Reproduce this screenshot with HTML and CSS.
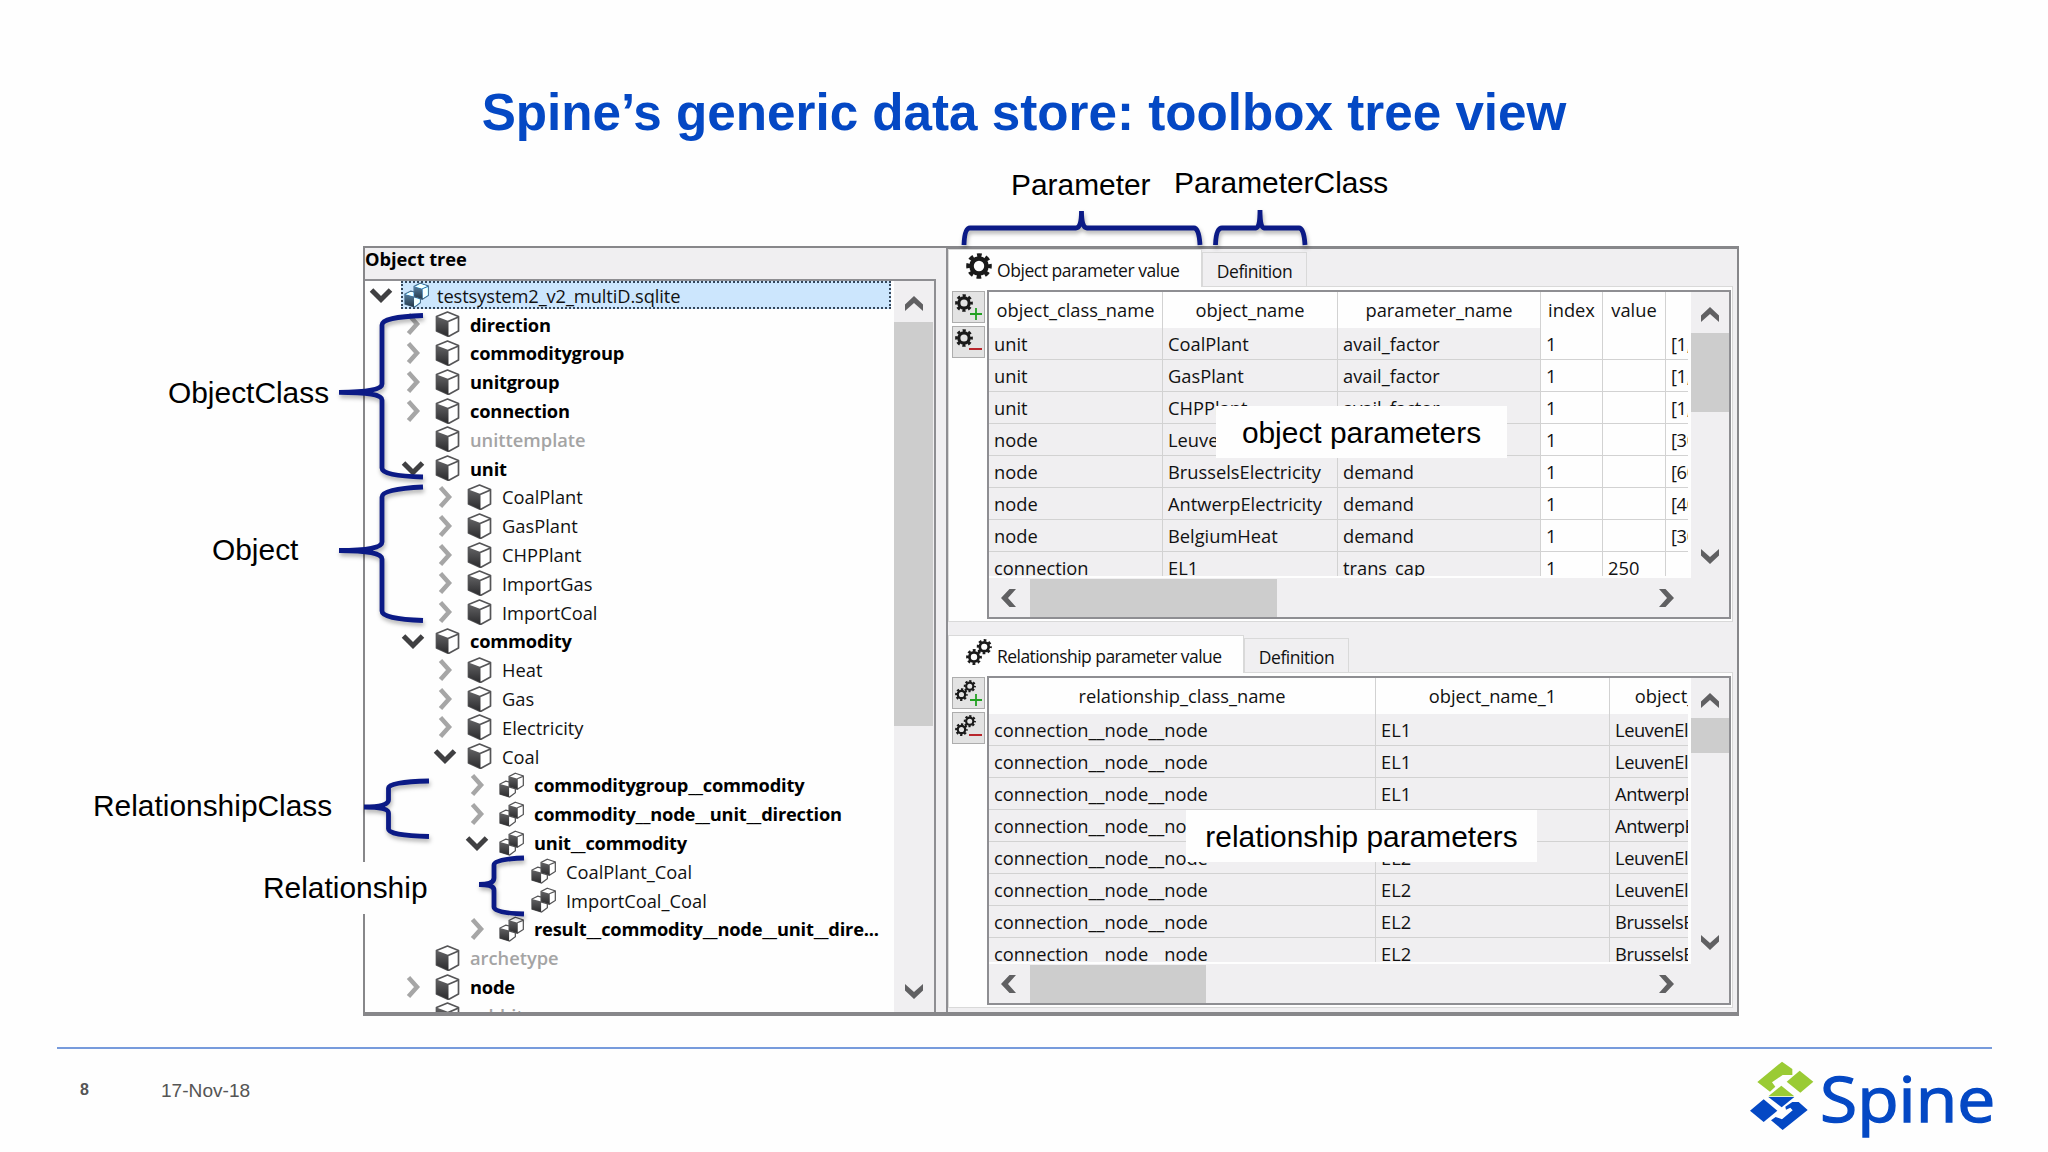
FILE: index.html
```html
<!DOCTYPE html>
<html lang="en">
<head>
  <meta charset="UTF-8" />
  <title>Spine’s generic data store: toolbox tree view</title>
  <link rel="stylesheet" href="styles.css">
</head>
<body>
  <!-- icon set -->
  <svg class="defs">
    <defs>
      <linearGradient id="shade" x1="0" y1="0" x2="0" y2="1">
        <stop offset="0" stop-color="#626264" />
        <stop offset="1" stop-color="#2b2b2d" />
      </linearGradient>
      <symbol id="right" viewBox="0 0 24 24"><path d="M7.500 2.500l8.500 9.500L7.500 21.500" fill="none" stroke="#a6a6a6" stroke-width="4.500" /></symbol>
      <symbol id="down" viewBox="0 0 24 24"><path d="M2.500 7l9.500 9.500L21.500 7" fill="none" stroke="#404042" stroke-width="5" /></symbol>
      <symbol id="arrow" viewBox="0 0 20 20"><path d="M1 10.500L10 2l9 8.500V17l-9-8-9 8z" fill="#606062" /></symbol>
      <symbol id="cube" viewBox="0 0 24 26">
        <path d="M12 1L23 5.500V20l-10 5.500L1 20V5.500z" fill="#fff" stroke="#555557" stroke-width="1.700" stroke-linejoin="round" />
        <path d="M1 5.500L13 10v15.500L1 20z" fill="url(#shade)" />
        <path d="M12.500 10.500L23 6" stroke="#555557" stroke-width="1.900" />
      </symbol>
      <symbol id="cubes" viewBox="0 0 26 26">
        <path d="M7 9l10 2.500v9.500l-6 4.500-10-3V12z" fill="#fff" stroke="#555557" stroke-width="1.300" />
        <path d="M1 12l9.500 2.500v11L1 22.500z" fill="url(#shade)" />
        <path d="M17 .8l8.300 2.700V13.500l-6.300 4L10.500 15V4z" fill="#fff" stroke="#555557" stroke-width="1.300" />
        <path d="M10.500 4l9 2.500v11l-9-3z" fill="url(#shade)" />
        <path d="M19 6.500l6-2.500" stroke="#555557" stroke-width="1.300" />
      </symbol>
      <symbol id="gear" viewBox="0 0 26 26">
        <circle cx="13" cy="13" r="7.500" fill="none" stroke="#1a1a1a" stroke-width="4.600" />
        <circle cx="13" cy="13" r="10.800" fill="none" stroke="#1a1a1a" stroke-width="4" stroke-dasharray="4.600 3.882" stroke-dashoffset="2.300" />
      </symbol>
      <symbol id="gears" viewBox="0 0 26 26">
        <use href="#gear" x="0" y="10" width="16" height="16" />
        <use href="#gear" x="10.500" y="0" width="15.500" height="15.500" />
      </symbol>
    </defs>
  </svg>

  <div class="slide">
    <h1>Spine’s generic data store: toolbox tree view</h1>

    <div class="window">
      <div class="tree-pane">
        <div class="tree-title">Object tree</div>
        <div class="tree-box">
          <div class="tree">
            <div class="row l0"><svg class="chev"><use href="#down" /></svg><div class="selected"><svg class="icon"><use href="#cubes" /></svg><span>testsystem2_v2_multiD.sqlite</span></div></div>
            <div class="row l1"><svg class="chev"><use href="#right" /></svg><svg class="icon"><use href="#cube" /></svg><b>direction</b></div>
            <div class="row l1"><svg class="chev"><use href="#right" /></svg><svg class="icon"><use href="#cube" /></svg><b>commoditygroup</b></div>
            <div class="row l1"><svg class="chev"><use href="#right" /></svg><svg class="icon"><use href="#cube" /></svg><b>unitgroup</b></div>
            <div class="row l1"><svg class="chev"><use href="#right" /></svg><svg class="icon"><use href="#cube" /></svg><b>connection</b></div>
            <div class="row l1"><i class="chev"></i><svg class="icon"><use href="#cube" /></svg><b class="empty">unittemplate</b></div>
            <div class="row l1"><svg class="chev"><use href="#down" /></svg><svg class="icon"><use href="#cube" /></svg><b>unit</b></div>
            <div class="row l2"><svg class="chev"><use href="#right" /></svg><svg class="icon"><use href="#cube" /></svg><span>CoalPlant</span></div>
            <div class="row l2"><svg class="chev"><use href="#right" /></svg><svg class="icon"><use href="#cube" /></svg><span>GasPlant</span></div>
            <div class="row l2"><svg class="chev"><use href="#right" /></svg><svg class="icon"><use href="#cube" /></svg><span>CHPPlant</span></div>
            <div class="row l2"><svg class="chev"><use href="#right" /></svg><svg class="icon"><use href="#cube" /></svg><span>ImportGas</span></div>
            <div class="row l2"><svg class="chev"><use href="#right" /></svg><svg class="icon"><use href="#cube" /></svg><span>ImportCoal</span></div>
            <div class="row l1"><svg class="chev"><use href="#down" /></svg><svg class="icon"><use href="#cube" /></svg><b>commodity</b></div>
            <div class="row l2"><svg class="chev"><use href="#right" /></svg><svg class="icon"><use href="#cube" /></svg><span>Heat</span></div>
            <div class="row l2"><svg class="chev"><use href="#right" /></svg><svg class="icon"><use href="#cube" /></svg><span>Gas</span></div>
            <div class="row l2"><svg class="chev"><use href="#right" /></svg><svg class="icon"><use href="#cube" /></svg><span>Electricity</span></div>
            <div class="row l2"><svg class="chev"><use href="#down" /></svg><svg class="icon"><use href="#cube" /></svg><span>Coal</span></div>
            <div class="row l3"><svg class="chev"><use href="#right" /></svg><svg class="icon"><use href="#cubes" /></svg><b>commoditygroup__commodity</b></div>
            <div class="row l3"><svg class="chev"><use href="#right" /></svg><svg class="icon"><use href="#cubes" /></svg><b>commodity__node__unit__direction</b></div>
            <div class="row l3"><svg class="chev"><use href="#down" /></svg><svg class="icon"><use href="#cubes" /></svg><b>unit__commodity</b></div>
            <div class="row l4"><i class="chev"></i><svg class="icon"><use href="#cubes" /></svg><span>CoalPlant_Coal</span></div>
            <div class="row l4"><i class="chev"></i><svg class="icon"><use href="#cubes" /></svg><span>ImportCoal_Coal</span></div>
            <div class="row l3"><svg class="chev"><use href="#right" /></svg><svg class="icon"><use href="#cubes" /></svg><b>result__commodity__node__unit__dire...</b></div>
            <div class="row l1"><i class="chev"></i><svg class="icon"><use href="#cube" /></svg><b class="empty">archetype</b></div>
            <div class="row l1"><svg class="chev"><use href="#right" /></svg><svg class="icon"><use href="#cube" /></svg><b>node</b></div>
            <div class="row l1"><i class="chev"></i><svg class="icon"><use href="#cube" /></svg><b class="empty">rabbit</b></div>
          </div>
          <div class="vscroll tree-scroll">
            <svg class="arrow"><use href="#arrow" /></svg>
            <div class="thumb"></div>
            <svg class="arrow flip"><use href="#arrow" /></svg>
          </div>
        </div>
      </div>

      <div class="param-pane">
        <div class="tabs">
          <div class="tab active"><svg><use href="#gear" /></svg>Object parameter value</div>
          <div class="tab">Definition</div>
        </div>
        <div class="tab-page">
          <div class="tools">
            <button><svg class="tool"><use href="#gear" width="18" height="18" /><path d="M21 14v12M15 20h12" stroke="#22a022" stroke-width="1.800" /></svg></button>
            <button><svg class="tool"><use href="#gear" width="18" height="18" /><path d="M14 20h13" stroke="#b8262c" stroke-width="2" /></svg></button>
          </div>
          <div class="grid">
            <div class="view">
              <table class="objects">
                <colgroup><col class="c1"><col class="c2"><col class="c3"><col class="c4"><col class="c5"><col class="c6"></colgroup>
                <tr><th>object_class_name</th><th>object_name</th><th>parameter_name</th><th>index</th><th>value</th><th></th></tr>
                <tr><td>unit</td><td>CoalPlant</td><td>avail_factor</td><td>1</td><td></td><td>[1, 1</td></tr>
                <tr><td>unit</td><td>GasPlant</td><td>avail_factor</td><td>1</td><td></td><td>[1, 1</td></tr>
                <tr><td>unit</td><td>CHPPlant</td><td>avail_factor</td><td>1</td><td></td><td>[1, 1</td></tr>
                <tr><td>node</td><td>LeuvenElectricity</td><td>demand</td><td>1</td><td></td><td>[300</td></tr>
                <tr><td>node</td><td>BrusselsElectricity</td><td>demand</td><td>1</td><td></td><td>[600</td></tr>
                <tr><td>node</td><td>AntwerpElectricity</td><td>demand</td><td>1</td><td></td><td>[400</td></tr>
                <tr><td>node</td><td>BelgiumHeat</td><td>demand</td><td>1</td><td></td><td>[300</td></tr>
                <tr><td>connection</td><td>EL1</td><td>trans_cap</td><td>1</td><td>250</td><td></td></tr>
              </table>
            </div>
            <div class="vscroll object-scroll">
              <svg class="arrow"><use href="#arrow" /></svg>
              <div class="thumb"></div>
              <svg class="arrow flip"><use href="#arrow" /></svg>
            </div>
            <div class="hscroll">
              <svg class="arrow to-left"><use href="#arrow" /></svg>
              <div class="thumb"></div>
              <svg class="arrow to-right"><use href="#arrow" /></svg>
            </div>
          </div>
        </div>

        <div class="tabs second">
          <div class="tab active"><svg><use href="#gears" /></svg>Relationship parameter value</div>
          <div class="tab">Definition</div>
        </div>
        <div class="tab-page">
          <div class="tools">
            <button><svg class="tool"><use href="#gears" width="21" height="21" /><path d="M21 14v12M15 20h12" stroke="#22a022" stroke-width="1.800" /></svg></button>
            <button><svg class="tool"><use href="#gears" width="21" height="21" /><path d="M14 20h13" stroke="#b8262c" stroke-width="2" /></svg></button>
          </div>
          <div class="grid">
            <div class="view">
              <table class="relations">
                <colgroup><col class="r1"><col class="r2"><col class="r3"></colgroup>
                <tr><th>relationship_class_name</th><th>object_name_1</th><th>object_name_2</th></tr>
                <tr><td>connection__node__node</td><td>EL1</td><td>LeuvenElectricity</td></tr>
                <tr><td>connection__node__node</td><td>EL1</td><td>LeuvenElectricity</td></tr>
                <tr><td>connection__node__node</td><td>EL1</td><td>AntwerpElectricity</td></tr>
                <tr><td>connection__node__node</td><td>EL1</td><td>AntwerpElectricity</td></tr>
                <tr><td>connection__node__node</td><td>EL2</td><td>LeuvenElectricity</td></tr>
                <tr><td>connection__node__node</td><td>EL2</td><td>LeuvenElectricity</td></tr>
                <tr><td>connection__node__node</td><td>EL2</td><td>BrusselsElectricity</td></tr>
                <tr><td>connection__node__node</td><td>EL2</td><td>BrusselsElectricity</td></tr>
              </table>
            </div>
            <div class="vscroll relation-scroll">
              <svg class="arrow"><use href="#arrow" /></svg>
              <div class="thumb"></div>
              <svg class="arrow flip"><use href="#arrow" /></svg>
            </div>
            <div class="hscroll short">
              <svg class="arrow to-left"><use href="#arrow" /></svg>
              <div class="thumb"></div>
              <svg class="arrow to-right"><use href="#arrow" /></svg>
            </div>
          </div>
        </div>
      </div>
    </div>

    <footer>
      <span class="page">8</span>
      <span class="date">17-Nov-18</span>
      <svg class="logo" viewBox="90 90 732 240">
        <g fill="#9acb34">
          <path d="M112 156L186 95l31 22v18h-29l-32 22 10 13-16 15z" />
          <path d="M239 122l41 33-39 33-41-33z" />
          <path d="M184 167l39 32h-78z" />
        </g>
        <g fill="#0448c4">
          <path d="M145 201h78l-38 31z" />
          <path d="M131 208l41 34-41 34-41-34z" />
          <path d="M217 216h19l27 24-75 60-35-29 14-10 19 7 32-27-7-8-13 6-2-9z" />
        </g>
        <text x="300" y="276" textLength="526" lengthAdjust="spacingAndGlyphs">Spine</text>
      </svg>
    </footer>

    <!-- callouts over the window -->
    <div class="label parameter">Parameter</div>
    <div class="label parameter-class">ParameterClass</div>
    <div class="label object-class">ObjectClass</div>
    <div class="label object">Object</div>
    <div class="label relationship-class">RelationshipClass</div>
    <div class="label relationship">Relationship</div>
    <div class="label boxed object-params">object parameters</div>
    <div class="label boxed relationship-params">relationship parameters</div>
    <svg class="braces" viewBox="0 0 2048 1152">
      <path d="M423 315.500Q382 317 382 325V384Q382 392.300 339 392.300Q382 392.300 382 400V468Q382 476 423 477" />
      <path d="M423 487Q382 489 382 497V542Q382 550.500 339 550.500Q382 550.500 382 559V611Q382 619 423 620.500" />
      <path d="M429 781Q388.500 782 388.500 788V800Q388.500 807 364 807Q388.500 807 388.500 813V829Q388.500 835.500 429 836.500" />
      <path d="M524 858Q494 859 494 865V878Q494 884.500 479 884.500Q494 884.500 494 890V907Q494 913 524 914" />
      <path d="M964 245Q964.500 228 970 228H1076Q1081.500 228 1081.500 211Q1081.500 228 1087 228H1194Q1199 228 1200 245" />
      <path d="M1215.500 245Q1216 228 1222 228H1256Q1260 228 1260 210Q1260 228 1264 228H1299Q1304 228 1305 245" />
    </svg>
  </div>
</body>
</html>
```
FILE: styles.css
```css
* {
  box-sizing: border-box;
}

body {
  margin: 0;
  background: #fefefe;
  font-family: "Liberation Sans", Arial, sans-serif;
}

.defs {
  position: absolute;
  width: 0;
  height: 0;
}

.slide {
  position: relative;
  width: 2048px;
  height: 1152px;
  overflow: hidden;
}

h1 {
  margin: 0;
  padding-top: 83px;
  height: 246px;
  font-size: 51.2px;
  line-height: 60px;
  text-align: center;
  color: #0448c4;
}

/* application window */
.window {
  display: flex;
  width: 1376px;
  height: 770px;
  margin-left: 363px;
  border: 2px solid #87878a;
  border-bottom: 4px solid #87878a;
  background: #f0eff1;
  font-family: "Open Sans", "Noto Sans", sans-serif;
  font-size: 18.3px;
  color: #111;
}

.tree-pane {
  display: flex;
  flex-direction: column;
  width: 571px;
}

.tree-title {
  height: 31px;
  line-height: 22px;
  font-weight: 700;
  letter-spacing: -0.05px;
  color: #000;
}

.tree-box {
  display: flex;
  flex: 1;
  min-height: 0;
  border-top: 2px solid #8e8e92;
  border-right: 2px solid #8e8e92;
  background: #fefefe;
}

.tree {
  flex: 1;
  overflow: hidden;
}

.row {
  display: flex;
  align-items: center;
  height: 28.8px;
  white-space: nowrap;
}

.l0 { padding-left: 4px; }
.l1 { padding-left: 36px; }
.l2 { padding-left: 68px; }
.l3 { padding-left: 100px; }
.l4 { padding-left: 132px; }

.chev {
  width: 24px;
  height: 24px;
  margin-right: 10px;
}

.icon {
  width: 25px;
  height: 26px;
  margin-right: 10px;
}

.l0 .chev {
  margin-right: 8px;
}

.selected {
  display: flex;
  align-items: center;
  width: 490px;
  height: 28px;
  padding-left: 1px;
  border: 2px dotted #34465a;
  background: #cce6fd;
  letter-spacing: -0.1px;
}

.selected .icon {
  margin-right: 8px;
  filter: sepia(1) hue-rotate(165deg) saturate(1.8);
}

.row b {
  font-weight: 700;
  letter-spacing: -0.2px;
  color: #000;
}

.row .empty {
  font-weight: 600;
  letter-spacing: 0;
  color: #a4a4a4;
}

/* scrollbars */
.vscroll {
  display: flex;
  flex-direction: column;
  align-items: center;
  background: #f0eff1;
}

.arrow {
  flex: none;
  width: 20px;
  height: 20px;
}

.thumb {
  background: #cdcdcd;
}

.flip { transform: rotate(180deg); }
.to-left { transform: rotate(-90deg); }
.to-right { transform: rotate(90deg); }

.tree-scroll {
  width: 40px;
  padding: 13px 1px 11px 0;
}

.tree-scroll .thumb {
  width: 39px;
  height: 404px;
  margin-top: 8px;
}

.vscroll .flip {
  margin-top: auto;
}

.hscroll {
  grid-column: 1 / 3;
  display: flex;
  align-items: center;
  padding: 0 53px 0 10px;
  background: #f0eff1;
}

.hscroll .thumb {
  width: 247px;
  height: 38px;
  margin-left: 11px;
}

.hscroll.short .thumb {
  width: 176px;
}

.hscroll .to-right {
  margin-left: auto;
}

.object-scroll,
.relation-scroll {
  padding: 13px 0 12px;
}

.object-scroll .thumb {
  width: 38px;
  height: 79px;
  margin-top: 8px;
}

.relation-scroll .thumb {
  width: 38px;
  height: 35px;
  margin-top: 7px;
}

/* parameter tables */
.param-pane {
  flex: 1;
  min-width: 0;
  margin-left: 10px;
  border-left: 2px solid #8e8e92;
  border-top: 1px solid #87878a;
}

.tabs {
  display: flex;
  align-items: flex-end;
  height: 37px;
}

.tabs.second {
  height: 37px;
  margin-top: 13px;
}

.tab {
  display: flex;
  align-items: center;
  justify-content: center;
  width: 105px;
  height: 34px;
  padding-top: 3px;
  border: 1px solid #d9d9d9;
  border-bottom: 0;
  font-size: 17.5px;
  letter-spacing: -0.45px;
}

.tab.active {
  position: relative;
  z-index: 1;
  justify-content: flex-start;
  width: 254px;
  height: 38px;
  margin-bottom: -1px;
  padding: 3px 0 0 17px;
  background: #fefefe;
  white-space: nowrap;
}

.second .tab.active {
  width: 296px;
  letter-spacing: -0.55px;
}

.tab svg {
  width: 26px;
  height: 26px;
  margin: -8px 5px 0 0;
}

.tab-page {
  display: flex;
  width: 785px;
  height: 336px;
  padding: 3px 1px 3px 3px;
  border: 1px solid #d9d9d9;
  background: #fefefe;
}

.tools {
  width: 35px;
}

.tools button {
  display: block;
  width: 33px;
  height: 32px;
  margin: 1px 0 3px;
  padding: 0;
  border: 1px solid #adadad;
  background: #e3e3e3;
}

.tool {
  display: block;
  width: 31px;
  height: 30px;
  padding: 2px;
}

.grid {
  display: grid;
  grid-template-columns: 1fr 38px;
  grid-template-rows: 1fr 39px;
  width: 744px;
  height: 329px;
  border: 2px solid #8e8e92;
}

.view {
  overflow: hidden;
  margin: 0 3px 2px 0;
}

table {
  table-layout: fixed;
  border-spacing: 0;
}

.objects { width: 761px; }
.relations { width: 799px; }
.c1 { width: 174px; }
.c2 { width: 175px; }
.c3 { width: 203px; }
.c4 { width: 62px; }
.c5 { width: 63px; }
.r1 { width: 387px; }
.r2 { width: 234px; }

th, td {
  padding: 0 0 0 5px;
  border-right: 1px solid #d2d2d2;
  white-space: nowrap;
  overflow: hidden;
}

th {
  height: 36px;
  padding: 0 3px 2px;
  background: #fefefe;
  font-weight: 400;
}

td {
  height: 32px;
  padding-bottom: 1px;
  border-bottom: 1px solid #d2d2d2;
  background: #f0eff1;
}

td:last-child {
  letter-spacing: -0.4px;
}

.objects td:nth-child(n + 4) {
  background: #fefefe;
}

/* footer */
footer {
  display: flex;
  height: 100px;
  margin: 31px 56px 0 57px;
  border-top: 2px solid #779bdc;
  color: #555;
}

.page {
  width: 104px;
  padding: 32px 0 0 23px;
  font-size: 16px;
  font-weight: bold;
}

.date {
  padding-top: 31px;
  font-size: 19.1px;
}

.logo {
  width: 244px;
  height: 80px;
  margin: 11px -2px 0 auto;
  overflow: visible;
}

.logo text {
  font: 500 188px "Open Sans", "Noto Sans", sans-serif;
  fill: #0448c4;
  stroke: #0448c4;
  stroke-width: 4;
}

/* callouts */
.label {
  position: absolute;
  font-size: 29.9px;
  line-height: 34px;
  white-space: nowrap;
  color: #000;
}

.boxed {
  height: 52px;
  line-height: 53px;
  background: #fefefe;
  text-align: center;
}

.parameter { left: 1011px; top: 168px; }
.parameter-class { left: 1174px; top: 166px; }
.object-class { left: 168px; top: 376px; }
.object { left: 212px; top: 533px; }
.relationship-class { left: 93px; top: 789px; }
.relationship {
  left: 263px;
  top: 862px;
  height: 52px;
  width: 174px;
  line-height: 52px;
  background: #fefefe;
}
.object-params { left: 1216px; top: 406px; width: 291px; }
.relationship-params { left: 1186px; top: 810px; width: 351px; }

.braces {
  position: absolute;
  left: 0;
  top: 0;
  width: 2048px;
  height: 1152px;
  fill: none;
  stroke: #0b1a86;
  stroke-width: 4.8;
  filter: drop-shadow(1px 3px 2px rgba(0, 0, 0, 0.3));
}
```
